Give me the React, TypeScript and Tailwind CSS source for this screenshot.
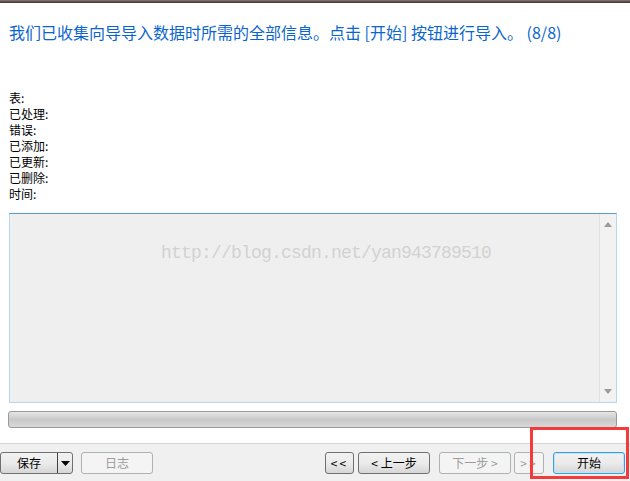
import React from 'react';

const labels = ['表:', '已处理:', '错误:', '已添加:', '已更新:', '已删除:', '时间:'];

const btnBase =
  'h-[22px] rounded-[3px] border text-[12px] leading-none flex items-center justify-center';
const btnNormal =
  'border-[#707070] bg-gradient-to-b from-[#f2f2f2] via-[#ebebeb] to-[#d6d6d6] text-black';
const btnDisabled = 'border-[#adb2b5] bg-[#f4f4f4] text-[#9c9c9c]';

export default function App() {
  return (
    <div
      className="relative w-[630px] h-[481px] bg-white overflow-hidden flex flex-col"
      style={{ fontFamily: '"Noto Sans CJK SC", "Liberation Sans", sans-serif' }}
    >
      {/* window frame top edge */}
      <div className="h-[3px] bg-gradient-to-b from-[#8a7a78] to-[#3d302f]" />

      {/* heading */}
      <div className="mt-[19px] pl-[9px] text-[16px] leading-[20px] text-[#0a66cc] whitespace-nowrap">
        我们已收集向导导入数据时所需的全部信息。点击 [开始] 按钮进行导入。 (8/8)
      </div>

      {/* status labels */}
      <div className="mt-[48px] pl-[9px] flex flex-col text-[12px] leading-[16px] text-black">
        {labels.map((l) => (
          <div key={l}>{l}</div>
        ))}
      </div>

      {/* log box */}
      <div className="relative mt-[11px] ml-[9px] w-[608px] h-[190px] border border-[#b7d6ef] border-t-[#5c9ccc] bg-[#efefef] flex">
        <div className="flex-1" />
        <div className="w-[17px] bg-[#f2f2f2] border-l border-[#e2e2e2] flex flex-col items-center justify-between py-[8px]">
          <svg width="8" height="5" viewBox="0 0 8 5">
            <path d="M4 0 L8 5 L0 5 Z" fill="#9a9a9a" />
          </svg>
          <svg width="8" height="5" viewBox="0 0 8 5">
            <path d="M0 0 L8 0 L4 5 Z" fill="#9a9a9a" />
          </svg>
        </div>
        <div
          className="absolute left-[151px] top-[26px] text-[18px] tracking-[-0.8px] text-[#d2d2d2] whitespace-nowrap"
          style={{ fontFamily: '"Liberation Mono", monospace' }}
        >
          http://blog.csdn.net/yan943789510
        </div>
      </div>

      {/* progress bar */}
      <div className="mt-[8px] ml-[8px] w-[609px] h-[17px] rounded-[3px] border border-[#9a9a9a] bg-gradient-to-b from-[#e6e6e6] via-[#c9c9c9] to-[#d8d8d8]" />

      {/* footer */}
      <div className="mt-[15px] flex-1 bg-[#f0f0f0] border-t border-[#d5d5d5] pt-[8px] flex items-start">
        <div className={`${btnBase} ${btnNormal} w-[73px] justify-start`}>
          <span className="w-[56px] text-center">保存</span>
          <span className="h-full w-px bg-[#404040]" />
          <span className="flex-1 flex items-center justify-center">
            <svg width="9" height="5" viewBox="0 0 9 5">
              <path d="M0 0 L9 0 L4.5 5 Z" fill="#000" />
            </svg>
          </span>
        </div>
        <div className={`${btnBase} ${btnDisabled} ml-[8px] w-[72px]`}>日志</div>

        <div className={`${btnBase} ${btnNormal} ml-[172px] w-[29px] tracking-[2px]`}>&lt;&lt;</div>
        <div className={`${btnBase} ${btnNormal} ml-[4px] w-[72px]`}>&lt; 上一步</div>
        <div className={`${btnBase} ${btnDisabled} ml-[9px] w-[72px]`}>下一步 &gt;</div>
        <div className={`${btnBase} ${btnDisabled} ml-[3px] w-[30px] tracking-[2px]`}>&gt;&gt;</div>
        <div className={`${btnBase} ml-[9px] w-[72px] border-[#3c9fdb] bg-gradient-to-b from-[#f2f2f2] via-[#ebebeb] to-[#d6d6d6] text-black shadow-[inset_0_0_0_1px_#bfe3f7]`}>
          开始
        </div>
      </div>

      {/* annotation */}
      <div className="absolute left-[530px] top-[427px] w-[99px] h-[52px] border-[3px] border-[#f43b3b]" />
    </div>
  );
}
